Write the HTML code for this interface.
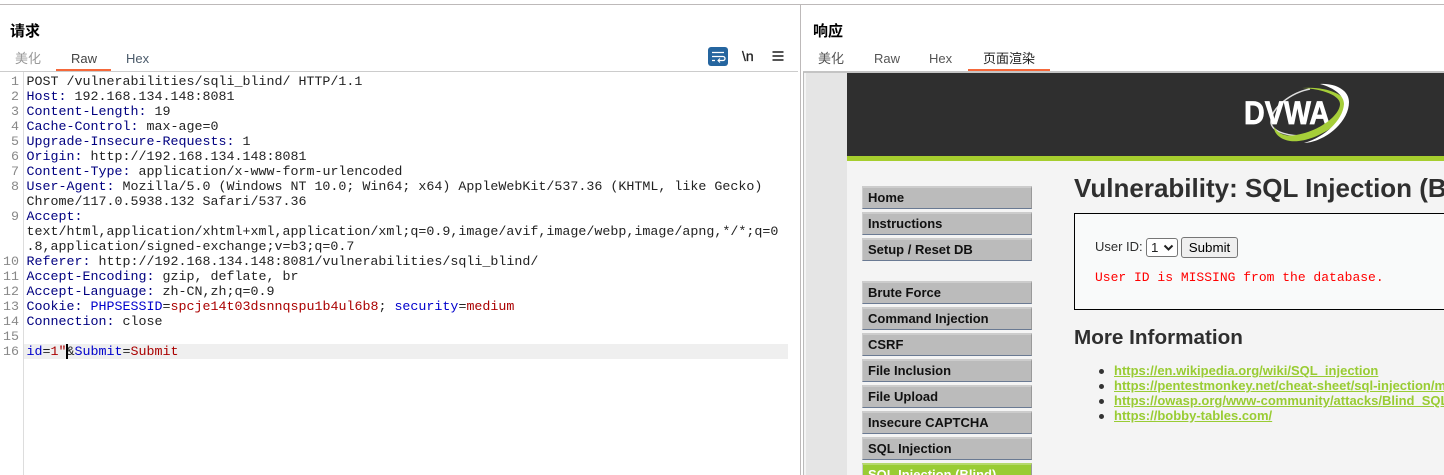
<!DOCTYPE html>
<html lang="zh"><head><meta charset="utf-8">
<style>
html,body{margin:0;padding:0;background:#fff}
#p{position:relative;width:1444px;height:475px;overflow:hidden;background:#fff;font-family:"Liberation Sans","Noto Sans CJK SC",sans-serif}
.a{position:absolute;white-space:pre}
.t{font-size:13px;line-height:16px;color:#555;top:51px}
.h{font-size:15px;line-height:16px;font-weight:bold;color:#000;top:24px}
.m{left:26.5px;font:13.33px/17px "Liberation Mono",monospace;color:#222;height:15px}
.n{left:0;width:19px;text-align:right;font:13.33px/17px "Liberation Mono",monospace;color:#888;height:15px}
.b{color:#000080}.l{color:#00c}.r{color:#a00}
.nav{left:862px;width:170px;height:23px;box-sizing:border-box;background:#bbb;border-top:2px solid #ccc;border-bottom:1px solid #6a7a93;border-left:1px solid #ccc;border-right:1px solid #999;font-size:13px;font-weight:bold;line-height:19px;padding-left:5px;color:#111}
.lk{left:1114px;font-size:13px;line-height:15px;font-weight:bold;color:#9c3;text-decoration:underline}
.dot{left:1098.5px;width:5px;height:5px;border-radius:50%;background:#333}
</style></head><body><div id="p">
<div class="a" style="left:0;top:4px;width:1444px;height:1px;background:#bdb9b9"></div>
<div class="a" style="left:800px;top:5px;width:1px;height:470px;background:#bdb9b9"></div>
<div class="a" style="left:0;top:71px;width:798px;height:1px;background:#ccc"></div>
<div class="a" style="left:23px;top:72px;width:1px;height:403px;background:#ddd"></div>

<div class="a h" style="left:10px">请求</div>
<div class="a t" style="left:15px;color:#999">美化</div>
<div class="a t" style="left:71px;color:#444">Raw</div>
<div class="a" style="left:56px;top:69px;width:55px;height:2px;background:#f5683a"></div>
<div class="a t" style="left:126px;color:#4a5a6a">Hex</div>

<svg class="a" style="left:708px;top:47px" width="20" height="19" viewBox="0 0 20 19"><rect width="20" height="19" rx="3" fill="#25659f"/><path d="M4 5.500H16M4 9.500H15a2 2 0 0 1 0 4H10M4 13.500H7" stroke="#fff" stroke-width="1.300" fill="none"/><path d="M12 11.500L10 13.500L12 15.500" stroke="#fff" stroke-width="1.100" fill="none"/></svg>
<div class="a" style="left:742px;top:47px;font-size:14px;line-height:18px;color:#222;-webkit-text-stroke:.3px #222">\n</div>
<svg class="a" style="left:772px;top:50px" width="12" height="12"><path d="M.5 2H11.500M.5 6H11.500M.5 10H11.500" stroke="#555" stroke-width="2"/></svg>

<div class="a" style="left:24px;top:344px;width:764px;height:15px;background:#efefef"></div>

<div class="a n" style="top:74px">1</div><div class="a m" style="top:74px">POST /vulnerabilities/sqli_blind/ HTTP/1.1</div>
<div class="a n" style="top:89px">2</div><div class="a m" style="top:89px"><span class="b">Host:</span> 192.168.134.148:8081</div>
<div class="a n" style="top:104px">3</div><div class="a m" style="top:104px"><span class="b">Content-Length:</span> 19</div>
<div class="a n" style="top:119px">4</div><div class="a m" style="top:119px"><span class="b">Cache-Control:</span> max-age=0</div>
<div class="a n" style="top:134px">5</div><div class="a m" style="top:134px"><span class="b">Upgrade-Insecure-Requests:</span> 1</div>
<div class="a n" style="top:149px">6</div><div class="a m" style="top:149px"><span class="b">Origin:</span> http://192.168.134.148:8081</div>
<div class="a n" style="top:164px">7</div><div class="a m" style="top:164px"><span class="b">Content-Type:</span> application/x-www-form-urlencoded</div>
<div class="a n" style="top:179px">8</div><div class="a m" style="top:179px"><span class="b">User-Agent:</span> Mozilla/5.0 (Windows NT 10.0; Win64; x64) AppleWebKit/537.36 (KHTML, like Gecko)</div>
<div class="a m" style="top:194px">Chrome/117.0.5938.132 Safari/537.36</div>
<div class="a n" style="top:209px">9</div><div class="a m" style="top:209px"><span class="b">Accept:</span></div>
<div class="a m" style="top:224px">text/html,application/xhtml+xml,application/xml;q=0.9,image/avif,image/webp,image/apng,*/*;q=0</div>
<div class="a m" style="top:239px">.8,application/signed-exchange;v=b3;q=0.7</div>
<div class="a n" style="top:254px">10</div><div class="a m" style="top:254px"><span class="b">Referer:</span> http://192.168.134.148:8081/vulnerabilities/sqli_blind/</div>
<div class="a n" style="top:269px">11</div><div class="a m" style="top:269px"><span class="b">Accept-Encoding:</span> gzip, deflate, br</div>
<div class="a n" style="top:284px">12</div><div class="a m" style="top:284px"><span class="b">Accept-Language:</span> zh-CN,zh;q=0.9</div>
<div class="a n" style="top:299px">13</div><div class="a m" style="top:299px"><span class="b">Cookie:</span> <span class="l">PHPSESSID</span>=<span class="r">spcje14t03dsnnqspu1b4ul6b8</span>; <span class="l">security</span>=<span class="r">medium</span></div>
<div class="a n" style="top:314px">14</div><div class="a m" style="top:314px"><span class="b">Connection:</span> close</div>
<div class="a n" style="top:329px">15</div>
<div class="a n" style="top:344px">16</div><div class="a m" style="top:344px"><span class="l">id</span>=<span class="r">1"</span>&amp;<span class="l">Submit</span>=<span class="r">Submit</span></div>
<div class="a" style="left:66px;top:344px;width:2px;height:15px;background:#000"></div>

<div class="a h" style="left:813px">响应</div>
<div class="a t" style="left:818px">美化</div>
<div class="a t" style="left:874px">Raw</div>
<div class="a t" style="left:929px">Hex</div>
<div class="a t" style="left:983px;color:#222">页面渲染</div>
<div class="a" style="left:968px;top:69px;width:82px;height:2px;background:#f5683a"></div>

<div class="a" style="left:803px;top:71px;width:641px;height:2px;background:#c4c4c4"></div>
<div class="a" style="left:803px;top:72px;width:1px;height:403px;background:#bbb"></div>
<div class="a" style="left:804px;top:73px;width:2px;height:402px;background:#f4f4f4"></div>
<div class="a" style="left:806px;top:73px;width:41px;height:402px;background:#e5e5e5"></div>
<div class="a" style="left:847px;top:73px;width:597px;height:402px;background:#f4f4f4"></div>
<div class="a" style="left:847px;top:73px;width:597px;height:83px;background:#2f2f2f"></div>
<div class="a" style="left:847px;top:156px;width:597px;height:5px;background:#a6ce2e"></div>

<svg class="a" style="left:1240px;top:80px" width="112" height="68" viewBox="0 0 112 68">
<path d="M70 9C52 12 30 28 31 43C32 50 42 55 60 56" stroke="#ddd" stroke-width="1.500" fill="none"/>
<text x="4" y="44" font-family="Liberation Sans" font-size="32" font-weight="bold" fill="#fff" stroke="#fff" stroke-width=".7" textLength="86" lengthAdjust="spacingAndGlyphs">DVWA</text>
<path d="M62 8C85 6 106 14 107 25C108 42 72 64 50 61C39 59 34 53 34 47C38 54 46 57 56 55C80 51 100 35 100 24C100 16 84 9 62 8Z" fill="#a6ce39"/>
<path d="M80 4C95 3 109 10 109 22C109 42 85 62 64 63C85 57 103 40 104 24C104 16 95 8 80 4Z" fill="#fff"/>
</svg>

<div class="a nav" style="top:186px">Home</div>
<div class="a nav" style="top:212px">Instructions</div>
<div class="a nav" style="top:238px">Setup / Reset DB</div>
<div class="a nav" style="top:281px">Brute Force</div>
<div class="a nav" style="top:307px">Command Injection</div>
<div class="a nav" style="top:333px">CSRF</div>
<div class="a nav" style="top:359px">File Inclusion</div>
<div class="a nav" style="top:385px">File Upload</div>
<div class="a nav" style="top:411px">Insecure CAPTCHA</div>
<div class="a nav" style="top:437px">SQL Injection</div>
<div class="a nav" style="top:463px;background:#9c3;color:#fff;border-top-color:#b5d96a">SQL Injection (Blind)</div>

<div class="a" style="left:1074px;top:172px;font-size:26px;line-height:32px;font-weight:bold;color:#2f2f2f">Vulnerability: SQL Injection (Blind)</div>

<div class="a" style="left:1074px;top:213px;width:380px;height:97px;box-sizing:border-box;border:1px solid #000;background:#f9fafa"></div>
<div class="a" style="left:1095px;top:239px;font-size:13px;line-height:16px;color:#2f2f2f">User ID:</div>
<div class="a" style="left:1146px;top:238px;width:32px;height:19px;box-sizing:border-box;border:1px solid #767676;border-radius:3px;background:#fff;font-size:13.330px;line-height:17px;padding-left:4px;color:#222">1</div>
<svg class="a" style="left:1163px;top:244px" width="12" height="8"><path d="M1.500 1.500L5.500 5.500L9.500 1.500" stroke="#222" stroke-width="2" fill="none"/></svg>
<div class="a" style="left:1181px;top:237px;width:57px;height:21px;box-sizing:border-box;border:1px solid #767676;border-radius:3px;background:#efefef;font-size:13.330px;line-height:19px;text-align:center;color:#000">Submit</div>
<div class="a" style="left:1095px;top:270px;font:13px/15px 'Liberation Mono',monospace;color:#f00">User ID is MISSING from the database.</div>

<div class="a" style="left:1074px;top:325px;font-size:20.700px;line-height:26px;font-weight:bold;color:#2f2f2f">More Information</div>

<div class="a dot" style="top:369px"></div>
<div class="a dot" style="top:384px"></div>
<div class="a dot" style="top:399px"></div>
<div class="a dot" style="top:414px"></div>
<div class="a lk" style="top:363px">https://en.wikipedia.org/wiki/SQL_injection</div>
<div class="a lk" style="top:378px">https://pentestmonkey.net/cheat-sheet/sql-injection/mysql-sql-injection-cheat-sheet</div>
<div class="a lk" style="top:393px">https://owasp.org/www-community/attacks/Blind_SQL_Injection</div>
<div class="a lk" style="top:408px">https://bobby-tables.com/</div>
</div></body></html>
